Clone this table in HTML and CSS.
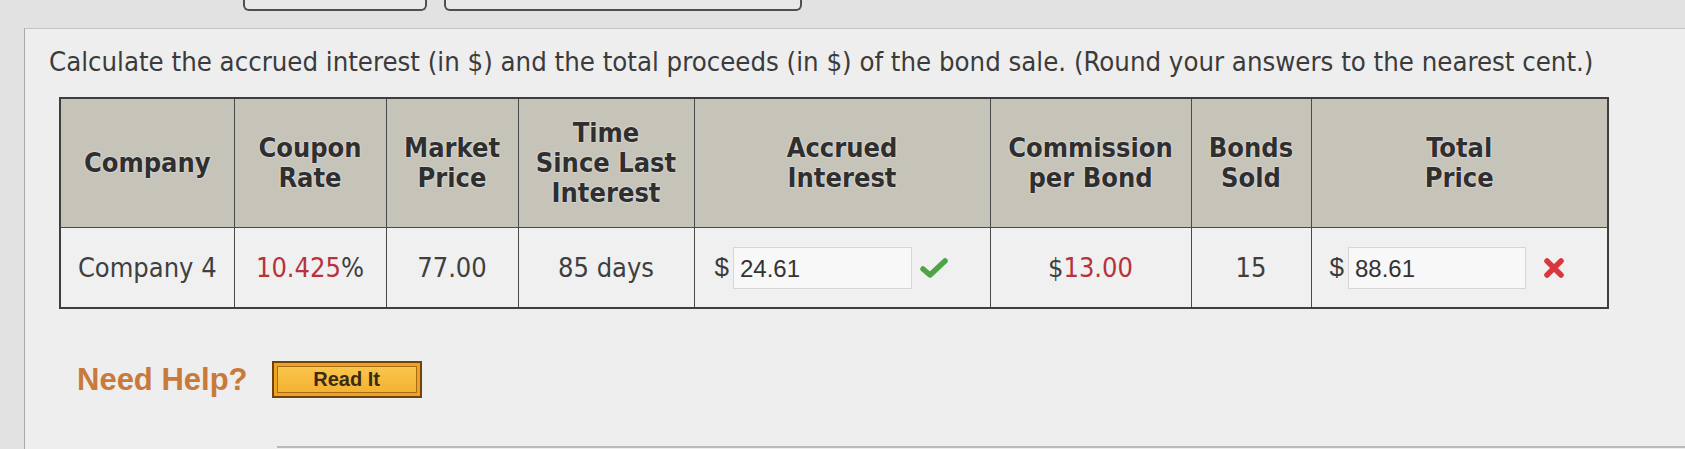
FILE: index.html
```html
<!DOCTYPE html>
<html>
<head>
<meta charset="utf-8">
<link rel="stylesheet" href="styles.css">
</head>
<body>
<div class="top">
  <div class="tab tab-a"></div>
  <div class="tab tab-b"></div>
</div>
<div class="panel">
  <p class="question">Calculate the accrued interest (in $) and the total proceeds (in $) of the bond sale. (Round your answers to the nearest cent.)</p>
  <table class="bonds">
    <colgroup>
      <col class="c1"><col class="c2"><col class="c3"><col class="c4"><col class="c5"><col class="c6"><col class="c7"><col class="c8">
    </colgroup>
    <thead>
      <tr>
        <th>Company</th>
        <th>Coupon<br>Rate</th>
        <th>Market<br>Price</th>
        <th>Time<br>Since Last<br>Interest</th>
        <th>Accrued<br>Interest</th>
        <th>Commission<br>per Bond</th>
        <th>Bonds<br>Sold</th>
        <th>Total<br>Price</th>
      </tr>
    </thead>
    <tbody>
      <tr>
        <td>Company 4</td>
        <td><span class="red">10.425</span>%</td>
        <td>77.00</td>
        <td>85 days</td>
        <td class="answer">
          <div class="ans ans-a">
            <span class="dollar">$</span>
            <span class="box">24.61</span>
            <svg class="mark mark-ok" width="28" height="24" viewBox="0 0 28 24"><path d="M3 13 L10 19 L25 5" fill="none" stroke="#4ca447" stroke-width="5.5" stroke-linecap="round" stroke-linejoin="round"/></svg>
          </div>
        </td>
        <td>$<span class="red">13.00</span></td>
        <td>15</td>
        <td class="answer">
          <div class="ans ans-b">
            <span class="dollar">$</span>
            <span class="box box-wide">88.61</span>
            <svg class="mark mark-bad" width="24" height="24" viewBox="0 0 24 24"><path d="M5 5 L19 19 M19 5 L5 19" fill="none" stroke="#d9363e" stroke-width="5.5" stroke-linecap="round"/></svg>
          </div>
        </td>
      </tr>
    </tbody>
  </table>
  <div class="help">
    <span class="need">Need Help?</span>
    <span class="readit"><span class="readit-inner">Read It</span></span>
  </div>
  <div class="bottomline"></div>
</div>
</body>
</html>
```
FILE: styles.css
```css
html, body {
  margin: 0;
  padding: 0;
}
body {
  background: #e2e2e2;
  width: 1685px;
  height: 449px;
  overflow: hidden;
  font-family: "DejaVu Sans Condensed", "DejaVu Sans", sans-serif;
  font-stretch: condensed;
  color: #3a3a3a;
}
.top {
  height: 28px;
  display: flex;
  gap: 17px;
  padding-left: 243px;
  box-sizing: border-box;
}
.tab {
  height: 9px;
  border: 2px solid #4d4f55;
  border-top: none;
  border-radius: 0 0 6px 6px;
  background: #e9e9e9;
}
.tab-a { width: 180px; }
.tab-b { width: 354px; }
.panel {
  margin-left: 24px;
  border-top: 1px solid #c4c4c4;
  border-left: 1px solid #a9a9a9;
  background: #eeeeee;
  height: 421px;
  padding-left: 24px;
  box-sizing: border-box;
}
.question {
  margin: 0;
  padding-top: 17px;
  font-size: 27.3px;
  line-height: 32px;
  color: #3b3b3b;
}
.bonds {
  margin-left: 10px;
  margin-top: 19px;
  border-collapse: collapse;
  border: 2px solid #3e3e3e;
  table-layout: fixed;
  width: 1548px;
}
.c1 { width: 174px; }
.c2 { width: 152px; }
.c3 { width: 132px; }
.c4 { width: 176px; }
.c5 { width: 296px; }
.c6 { width: 201px; }
.c7 { width: 120px; }
.c8 { width: 297px; }
.bonds th, .bonds td {
  border: 1px solid #4a4a4a;
  text-align: center;
  vertical-align: middle;
  padding: 0;
}
.bonds th {
  background: #c6c3b9;
  height: 128px;
  font-size: 27px;
  line-height: 30px;
  font-weight: bold;
  color: #2f2f2f;
  text-shadow: 0 0 2px #ffffff;
}
.bonds td {
  background: #f0f0f0;
  height: 79px;
  font-size: 27px;
  color: #3f3f3f;
}
.red { color: #b8323c; }
.bonds td.answer { text-align: left; }
.ans {
  display: flex;
  align-items: center;
}
.ans-a { padding-left: 20px; }
.ans-b { padding-left: 18px; }
.dollar {
  font-family: "Liberation Sans", Arial, sans-serif;
  font-size: 26px;
  color: #3a3a3a;
  margin-right: 4px;
}
.box {
  display: inline-block;
  width: 179px;
  height: 42px;
  line-height: 42px;
  box-sizing: border-box;
  padding-left: 6px;
  background: #f8f8f8;
  border: 1px solid #d6d6d6;
  font-family: "Liberation Sans", Arial, sans-serif;
  font-size: 24px;
  color: #333;
}
.box-wide { width: 178px; }
.mark-ok { margin-left: 8px; }
.mark-bad { margin-left: 16px; }
.help {
  display: flex;
  align-items: center;
  gap: 24px;
  margin-top: 52px;
  padding-left: 28px;
}
.need {
  font-family: "Liberation Sans", Arial, sans-serif;
  font-weight: bold;
  font-size: 31px;
  color: #c9793a;
}
.readit {
  display: inline-block;
  width: 150px;
  height: 37px;
  box-sizing: border-box;
  border: 2px solid #6e440c;
  background: #eea321;
  padding: 3px;
}
.readit-inner {
  display: block;
  height: 100%;
  box-sizing: border-box;
  border: 1px solid #a86a14;
  background: linear-gradient(#f9c54c, #f4b232);
  text-align: center;
  font-family: "Liberation Sans", Arial, sans-serif;
  font-weight: bold;
  font-size: 20px;
  line-height: 25px;
  color: #3a2c12;
}
.bottomline {
  margin-top: 48px;
  margin-left: 228px;
  border-top: 2px solid #b9b9b9;
}
```
